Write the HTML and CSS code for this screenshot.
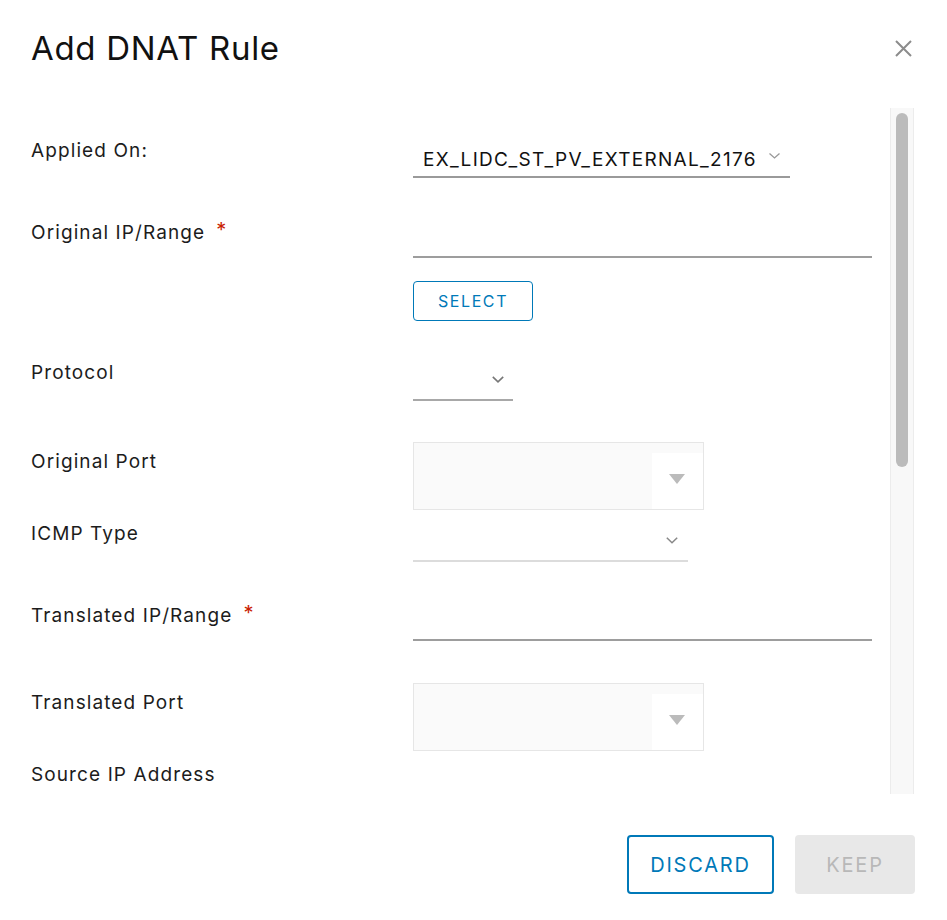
FILE: index.html
```html
<!DOCTYPE html>
<html>
	<head>
		<meta charset="UTF-8">
		<title>Add DNAT Rule</title>
		<link rel="stylesheet" href="styles.css">
	</head>
	<body>
		<div class="modal">
			<header class="modal-header">
				<h3 class="modal-title">Add DNAT Rule</h3>
				<button class="close" aria-label="Close">
					<svg width="17" height="17" viewBox="0 0 17 17"><path d="M1 1L16 16M16 1L1 16" stroke="#8c8c8c" stroke-width="2" fill="none"/></svg>
				</button>
			</header>

			<div class="modal-body">
				<form class="form">
					<!-- applied on -->
					<div class="row">
						<label class="lbl">Applied On:</label>
						<div class="ctl">
							<div class="select select-wide">
								<span>EX_LIDC_ST_PV_EXTERNAL_2176</span>
								<svg class="chev" width="11" height="6" viewBox="0 0 11 6"><path d="M0.5 0.5L5.5 5L10.5 0.5" stroke="#999" stroke-width="1.3" fill="none"/></svg>
							</div>
						</div>
					</div>

					<div class="row gap-42">
						<label class="lbl">Original IP/Range<span class="req">*</span></label>
						<div class="ctl">
							<div class="input"></div>
							<button type="button" class="btn-outline btn-sm">SELECT</button>
						</div>
					</div>

					<div class="row gap-39">
						<label class="lbl">Protocol</label>
						<div class="ctl">
							<div class="select select-small">
								<svg class="chev" width="12" height="7" viewBox="0 0 12 7"><path d="M0.8 0.8L6 5.8L11.2 0.8" stroke="#777" stroke-width="1.6" fill="none"/></svg>
							</div>
						</div>
					</div>

					<div class="row gap-41">
						<label class="lbl lbl-box">Original Port</label>
						<div class="ctl">
							<div class="combo">
								<div class="combo-field"></div>
								<div class="combo-arrow"><span class="tri"></span></div>
							</div>
						</div>
					</div>

					<div class="row gap-11">
						<label class="lbl">ICMP Type</label>
						<div class="ctl">
							<div class="select select-mid disabled">
								<svg class="chev" width="12" height="7" viewBox="0 0 12 7"><path d="M0.8 0.8L6 5.8L11.2 0.8" stroke="#888" stroke-width="1.5" fill="none"/></svg>
							</div>
						</div>
					</div>

					<div class="row gap-41">
						<label class="lbl">Translated IP/Range<span class="req">*</span></label>
						<div class="ctl">
							<div class="input"></div>
						</div>
					</div>

					<div class="row gap-42">
						<label class="lbl lbl-box">Translated Port</label>
						<div class="ctl">
							<div class="combo">
								<div class="combo-field"></div>
								<div class="combo-arrow"><span class="tri"></span></div>
							</div>
						</div>
					</div>

					<div class="row gap-11">
						<label class="lbl">Source IP Address</label>
						<div class="ctl">
							<div class="input"></div>
						</div>
					</div>
				</form>
				<div class="scrollbar"><div class="thumb"></div></div>
			</div>

			<footer class="modal-footer">
				<button type="button" class="btn-outline btn-lg">DISCARD</button>
				<button type="button" class="btn-disabled btn-lg">KEEP</button>
			</footer>
		</div>
	</body>
</html>
```

FILE: styles.css
```css
*{
	padding: 0;
	margin: 0;
	box-sizing: border-box;
}
body{
	background: #fff;
	font-family: Inter, Lato, sans-serif;
	color: #1c1c1c;
}
button{
	font-family: inherit;
	background: none;
	border: none;
	display: block;
}
.modal{
	width: 947px;
	height: 920px;
	display: flex;
	flex-direction: column;
}
.modal-header{
	height: 108px;
	display: flex;
	justify-content: space-between;
	align-items: flex-start;
	padding: 26px 35px 0 31px;
}
.modal-title{
	font-size: 33px;
	line-height: 44px;
	font-weight: 400;
	letter-spacing: 0.7px;
	color: #111;
}
.close{
	margin-top: 14px;
	width: 17px;
	height: 17px;
}
.close svg{
	display: block;
}

.modal-body{
	height: 687px;
	display: flex;
}
.form{
	flex: 1;
	padding: 30px 0 0 31px;
	overflow: hidden;
}
.row{
	display: flex;
	align-items: flex-start;
}
.gap-42{
	margin-top: 42px;
}
.gap-41{
	margin-top: 41px;
}
.gap-39{
	margin-top: 39px;
}
.gap-11{
	margin-top: 11px;
}
.lbl{
	width: 382px;
	font-size: 19px;
	line-height: 24px;
	letter-spacing: 1.1px;
	padding-top: 1px;
	display: flex;
}
.lbl-box{
	margin-top: 7px;
}
.req{
	color: #c92100;
	font-size: 20px;
	margin-left: 11px;
	line-height: 18px;
}
.ctl{
	width: 459px;
}

.select{
	display: flex;
	align-items: center;
	border-bottom: 2px solid #a8a8a8;
}
.select-wide{
	width: 377px;
	height: 40px;
	padding: 0 10px;
	border-bottom-color: #9a9a9a;
	font-size: 19px;
	letter-spacing: 1.3px;
	color: #111;
}
.select-wide span{
	flex: 1;
	margin-top: 5px;
}
.select-wide .chev{
	margin-top: -2px;
}
.select-small{
	width: 100px;
	height: 41px;
	justify-content: flex-end;
	padding-right: 9px;
}
.select-small .chev{
	margin-top: 0;
}
.select-mid{
	width: 275px;
	height: 41px;
	justify-content: flex-end;
	padding-right: 10px;
}
.select-mid .chev{
	margin-top: 0;
}
.select.disabled{
	border-bottom-color: #dcdcdc;
}

.input{
	height: 38px;
	border-bottom: 2px solid #9d9d9d;
}

.btn-outline{
	border: 1.5px solid #0079b8;
	color: #0079b8;
	background: #fff;
	border-radius: 4px;
	letter-spacing: 1.6px;
}
.btn-sm{
	margin-top: 23px;
	width: 120px;
	height: 40px;
	font-size: 16px;
}
.btn-lg{
	width: 147px;
	height: 59px;
	font-size: 20px;
	letter-spacing: 1.8px;
}
.btn-outline.btn-lg{
	border-width: 2px;
}
.btn-disabled{
	background: #e8e8e8;
	color: #b8b8b8;
	border-radius: 4px;
	width: 120px;
}

.combo{
	width: 291px;
	height: 68px;
	border: 1px solid #e6e6e6;
	background: #fafafa;
	display: flex;
}
.combo-field{
	flex: 1;
}
.combo-arrow{
	width: 51px;
	margin-top: 10px;
	background: #fff;
	display: flex;
	align-items: center;
	justify-content: center;
}
.tri{
	width: 0;
	height: 0;
	border-left: 8px solid transparent;
	border-right: 8px solid transparent;
	border-top: 10px solid #bbb;
	margin-left: -2px;
	margin-top: -4px;
}

.scrollbar{
	width: 24px;
	margin: 0 33px 0 0;
	background: #f8f8f8;
	border-left: 1px solid #ececec;
	border-right: 1px solid #ececec;
	padding: 5px 5px 0 5px;
	height: 686px;
}
.thumb{
	width: 12px;
	height: 354px;
	background: #bbb;
	border-radius: 6px;
}

.modal-footer{
	flex: 1;
	display: flex;
	justify-content: flex-end;
	align-items: flex-start;
	padding: 40px 32px 0 0;
	gap: 21px;
}
```
